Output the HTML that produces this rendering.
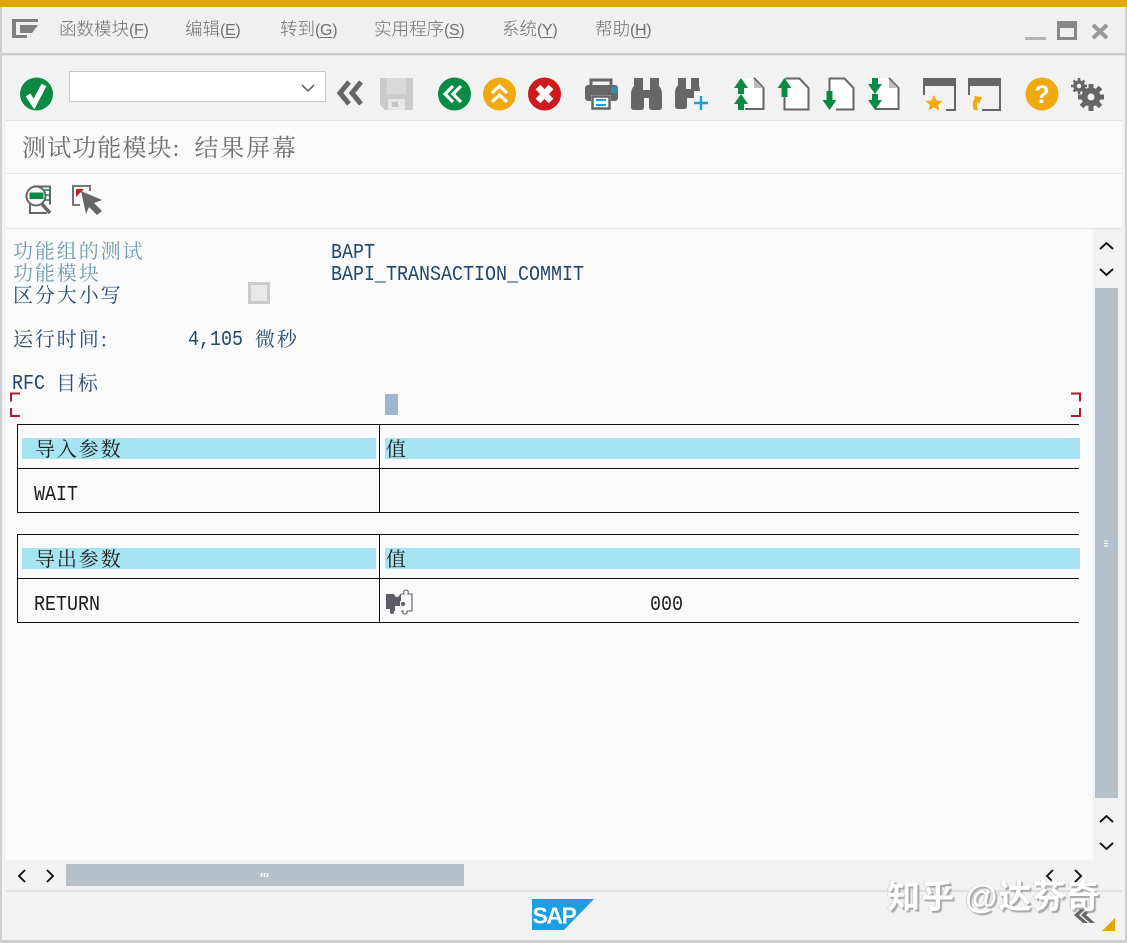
<!DOCTYPE html>
<html lang="zh">
<head>
<meta charset="utf-8">
<title>测试功能模块</title>
<style>
html,body{margin:0;padding:0;width:1127px;height:943px;overflow:hidden;background:#f2f2f2}
#p{position:relative;width:1127px;height:943px;overflow:hidden;background:#f2f2f2}
.b{position:absolute}
.t{position:absolute;white-space:pre;line-height:24px;height:24px}
.m{font-family:"Liberation Sans","Noto Sans CJK SC",sans-serif;font-weight:300;font-size:17.5px;color:#707070;top:17px}
.m span{font-size:16px;letter-spacing:-.3px}
.m u{text-underline-offset:2px}
.c{font-family:"Liberation Mono",monospace;font-size:21px;color:#23466e;transform:scaleX(.873);transform-origin:0 0}
.z{font-family:"Noto Serif CJK SC",serif;font-size:20px;letter-spacing:1.9px;transform:none;color:#2a4d75}
.k{color:#1c1c1c}
svg{position:absolute;left:0;top:0}
</style>
</head>
<body>
<div id="p">
<div class="b" style="left:0;top:0;width:1127px;height:7px;background:#dfa800"></div>
<div class="b" style="left:0;top:7px;width:1127px;height:46px;background:#f0f0f0"></div>
<div class="b" style="left:0;top:53px;width:1127px;height:2px;background:#c9c9c9"></div>
<div class="b" style="left:0;top:55px;width:1127px;height:1px;background:#e6e6e6"></div>
<div class="b" style="left:6px;top:120px;width:1116px;height:1px;background:#e3e3e3"></div>
<div class="b" style="left:6px;top:121px;width:1116px;height:52px;background:#fafafa"></div>
<div class="b" style="left:6px;top:173px;width:1116px;height:1px;background:#e6e6e6"></div>
<div class="b" style="left:6px;top:174px;width:1116px;height:54px;background:#fafafa"></div>
<div class="b" style="left:6px;top:228px;width:1116px;height:1px;background:#e3e3e3"></div>
<div class="b" style="left:6px;top:229px;width:1087px;height:631px;background:#fafafa"></div>
<div class="b" style="left:0;top:7px;width:2px;height:936px;background:#cfcfcf"></div>
<div class="b" style="right:0;top:7px;width:2px;height:936px;background:#cfcfcf"></div>
<div class="b" style="left:0;top:940px;width:1127px;height:3px;background:#cfcfcf"></div>
<div class="b" style="left:69px;top:71px;width:255px;height:29px;background:#fff;border:1px solid #c6c6c6"></div>
<div class="b" style="left:1095px;top:288px;width:23px;height:510px;background:#b5c0ca"></div>
<div class="b" style="left:66px;top:864px;width:398px;height:22px;background:#b5c0ca"></div>
<div class="b" style="left:6px;top:890px;width:1116px;height:2px;background:#dfdfdf"></div>
<div class="b" style="left:248px;top:282px;width:16px;height:16px;background:#e8e8e8;border:3px solid #cbcbcb"></div>
<div class="b" style="left:385px;top:394px;width:13px;height:21px;background:#9fb6d0"></div>

<div class="b" style="left:22px;top:438px;width:354px;height:21px;background:#a6e3f3"></div>
<div class="b" style="left:385px;top:438px;width:695px;height:21px;background:#a6e3f3"></div>
<div class="b" style="left:22px;top:548px;width:354px;height:21px;background:#a6e3f3"></div>
<div class="b" style="left:385px;top:548px;width:695px;height:21px;background:#a6e3f3"></div>

<div class="b" style="left:17px;top:424px;width:1062px;height:1px;background:#111"></div>
<div class="b" style="left:17px;top:468px;width:1062px;height:1px;background:#111"></div>
<div class="b" style="left:17px;top:512px;width:1062px;height:1px;background:#111"></div>
<div class="b" style="left:17px;top:424px;width:1px;height:89px;background:#111"></div>
<div class="b" style="left:379px;top:424px;width:1px;height:89px;background:#111"></div>
<div class="b" style="left:17px;top:534px;width:1062px;height:1px;background:#111"></div>
<div class="b" style="left:17px;top:578px;width:1062px;height:1px;background:#111"></div>
<div class="b" style="left:17px;top:622px;width:1062px;height:1px;background:#111"></div>
<div class="b" style="left:17px;top:534px;width:1px;height:89px;background:#111"></div>
<div class="b" style="left:379px;top:534px;width:1px;height:89px;background:#111"></div>

<div class="t m" style="left:59px">函数模块<span>(<u>F</u>)</span></div>
<div class="t m" style="left:185px">编辑<span>(<u>E</u>)</span></div>
<div class="t m" style="left:280px">转到<span>(<u>G</u>)</span></div>
<div class="t m" style="left:374px">实用程序<span>(<u>S</u>)</span></div>
<div class="t m" style="left:502px">系统<span>(<u>Y</u>)</span></div>
<div class="t m" style="left:595px">帮助<span>(<u>H</u>)</span></div>

<div class="t" style="left:22px;top:135px;line-height:28px;height:28px;font-family:'Liberation Serif','Noto Serif CJK SC',serif;font-size:24px;letter-spacing:1.100px;word-spacing:7px;color:#6f6f6f">测试功能模块: <span style="letter-spacing:1.800px">结果屏幕</span></div>

<div class="t z" style="left:13px;top:238px;color:#6f9eae">功能组的测试</div>
<div class="t z" style="left:13px;top:260px;color:#6f9eae">功能模块</div>
<div class="t z" style="left:13px;top:282px">区分大小写</div>
<div class="t c" style="left:331px;top:242px">BAPT</div>
<div class="t c" style="left:331px;top:264px">BAPI_TRANSACTION_COMMIT</div>
<div class="t z" style="left:13px;top:326px">运行时间:</div>
<div class="t c" style="left:188px;top:329px">4,105</div>
<div class="t z" style="left:255px;top:326px">微秒</div>
<div class="t c" style="left:12px;top:373px">RFC</div>
<div class="t z" style="left:56px;top:370px">目标</div>

<div class="t z k" style="left:35px;top:436px">导入参数</div>
<div class="t z k" style="left:386px;top:436px">值</div>
<div class="t c k" style="left:34px;top:484px">WAIT</div>
<div class="t z k" style="left:35px;top:546px">导出参数</div>
<div class="t z k" style="left:386px;top:546px">值</div>
<div class="t c k" style="left:34px;top:594px">RETURN</div>
<div class="t c k" style="left:650px;top:594px">000</div>

<svg width="1127" height="943" viewBox="0 0 1127 943">
  <!-- menu icon -->
  <path d="M12 19h26v3H16v13h11v3H12z" fill="#808080"/>
  <path d="M20 25h18l-6 8H20z" fill="#808080"/>
  <!-- window controls -->
  <rect x="1025" y="37" width="21" height="3" fill="#b4b4b4"/>
  <path fill-rule="evenodd" d="M1057 21h20v19h-20zM1060 28v9h14v-9z" fill="#888"/>
  <path d="M1093 25l14 13M1107 25l-14 13" stroke="#999" stroke-width="4" fill="none"/>
  <!-- ok -->
  <circle cx="36.500" cy="94" r="16.500" fill="#0a8a45"/>
  <path d="M28 95l6 9 10-19" stroke="#fff" stroke-width="5.500" fill="none"/>
  <!-- dropdown chevron -->
  <path d="M302 85l6 6 6-6" stroke="#666" stroke-width="1.600" fill="none"/>
  <!-- double chevron -->
  <path d="M349 82l-9 11 9 11M361 82l-9 11 9 11" stroke="#666" stroke-width="5" fill="none"/>
  <!-- save -->
  <path d="M380 78h33v32h-28l-5-5z" fill="#cbcbcb"/>
  <rect x="387" y="78" width="19" height="16" fill="#d9d9d9"/>
  <rect x="388" y="99" width="17" height="11" fill="#e6e6e6"/>
  <rect x="392" y="102" width="6" height="5" fill="#c4c4c4"/>
  <!-- nav circles -->
  <circle cx="454.500" cy="94" r="16.500" fill="#0a8a45"/>
  <path d="M453 86l-8 8 8 8M461 86l-8 8 8 8" stroke="#fff" stroke-width="3.200" fill="none"/>
  <circle cx="499.500" cy="94" r="16.500" fill="#f0a90f"/>
  <path d="M492 93l7.500-7 7.500 7M492 102l7.500-7 7.500 7" stroke="#fff" stroke-width="3.200" fill="none"/>
  <circle cx="544.500" cy="94" r="16.500" fill="#cf1a20"/>
  <path d="M538 87l13 14M551 87l-13 14" stroke="#fff" stroke-width="6.500" fill="none"/>
  <!-- printer -->
  <path d="M591 90v-10h20v10" stroke="#666" stroke-width="3" fill="none"/>
  <path d="M588 85h27a3 3 0 0 1 3 3v10a3 3 0 0 1-3 3h-4v-6h-20v6h-3a3.500 3.500 0 0 1-3-3V88a3 3 0 0 1 3-3z" fill="#666"/>
  <rect x="611" y="87" width="6" height="6" fill="#2f8fb5"/>
  <path d="M592.500 96.500h17v12h-17z" fill="#fff" stroke="#666" stroke-width="2.500"/>
  <path d="M596 100h10M596 105h10" stroke="#1aa0d8" stroke-width="2"/>
  <!-- binoculars -->
  <path d="M634 78h9v12h7V78h9v8q3 3 3 8v13q0 3-3 3h-7q-3 0-3-3v-9h-5v9q0 3-3 3h-7q-3 0-3-3V94q0-5 3-8z" fill="#666"/>
  <path d="M678 78h8v11h5V78h8v8q1 2 1 5h-6v7h-7v8q0 3-3 3h-6q-3 0-3-3V93q0-5 3-8z" fill="#666"/>
  <path d="M701 96v14M694 103h14" stroke="#1aa0d8" stroke-width="2.500"/>
  <!-- docs -->
  <path d="M745 78h9l10 10v22h-19z" fill="#fff"/>
  <path d="M754 78l9.500 10v21h-18.500" fill="none" stroke="#666" stroke-width="2"/>
  <path d="M754 79l9 9h-9z" fill="#bdbdbd"/>
  <path d="M741 78l-7 10h4v6h6v-6h4zM741 94l-7 10h4v6h6v-6h4z" fill="#0a8a45"/>
  <path d="M784.500 90v19.500h24V88l-9-9.500h-14" fill="#fff" stroke="#666" stroke-width="2"/>
  <path d="M784.500 78l-7 10h4v9h6v-9h4z" fill="#0a8a45"/>
  <path d="M829.500 99V78.500h15l9 9.500v21.500H836" fill="#fff" stroke="#666" stroke-width="2"/>
  <path d="M829.500 110l-7-10h4v-9h6v9h4z" fill="#0a8a45"/>
  <path d="M875 78h14l10 10v22h-24z" fill="#fff"/>
  <path d="M889 78l9.500 10v21h-23.500" fill="none" stroke="#666" stroke-width="2"/>
  <path d="M889 79l9 9h-9z" fill="#bdbdbd"/>
  <path d="M875 94l-7-10h4v-6h6v6h4zM875 110l-7-10h4v-6h6v6h4z" fill="#0a8a45"/>
  <!-- windows -->
  <path d="M923 78h33v8h-33z" fill="#666"/>
  <path d="M924 86v9M955 86v24h-9" stroke="#666" stroke-width="2" fill="none"/>
  <path d="M934 95l2.500 5.500 6 .5-4.500 4 1.500 5.500-5.500-3.200-5.500 3.200 1.500-5.500-4.500-4 6-.5z" fill="#f0a90f"/>
  <path d="M968 78h33v8h-33z" fill="#666"/>
  <path d="M969 86v9M1000 86v24h-18" stroke="#666" stroke-width="2" fill="none"/>
  <path d="M974 110q-3-7 1-12l-1-2 8 1-3 7-1-2q-2 3 0 8z" fill="#f0a90f"/>
  <!-- help -->
  <circle cx="1042" cy="94" r="16.500" fill="#f0a90f"/>
  <text x="1042" y="103" text-anchor="middle" font-family="Liberation Sans,sans-serif" font-weight="700" font-size="25" fill="#fff">?</text>
  <!-- gear -->
  <g fill="none" stroke="#666">
    <circle cx="1079" cy="86" r="4" stroke-width="3.500"/>
    <path d="M1079 78v3M1079 91v3M1071 86h3M1084 86h3M1073.500 80.500l2 2M1082.500 89.500l2 2M1084.500 80.500l-2 2M1075.500 89.500l-2 2" stroke-width="2.500"/>
    <circle cx="1091" cy="97" r="6.500" stroke-width="6"/>
    <path d="M1091 84v6M1091 104v7M1078 97h6M1098 97h6M1081.500 87.500l4 4M1096.500 102.500l4 4M1100.500 87.500l-4 4M1085.500 102.500l-4 4" stroke-width="5"/>
  </g>
  <!-- app toolbar: magnifier -->
  <path d="M33 186.500h17v18M30 201v12h17" stroke="#666" stroke-width="2" fill="none"/>
  <path d="M44 190h6M45 195h5M45 200h5" stroke="#0a8a45" stroke-width="1.500"/>
  <circle cx="36" cy="196" r="9.500" fill="#fafafa" stroke="#666" stroke-width="2"/>
  <rect x="29.500" y="192.500" width="14" height="6.500" fill="#0a8a45"/>
  <path d="M42 204l8 9" stroke="#666" stroke-width="3.500"/>
  <!-- cursor icon -->
  <path d="M80 205H73V186h17v5" stroke="#666" stroke-width="1.800" fill="none"/>
  <path d="M76 189h8l-8 8z" fill="#c21f2d"/>
  <path d="M81 191l21 9-8 3 8 8-5 4-8-8-3 7z" fill="#666"/>
  <!-- red brackets -->
  <path d="M20 393.500H11v8M11 408v8h9M1071 393.500h9v8M1080 408v8h-9" stroke="#b01c2e" stroke-width="2" fill="none"/>
  <!-- puzzle icon -->
  <path d="M386 594h8q1 3 3 3t3-3h1v7h-1v5h-5v3h-9z" fill="#5d5d68"/>
  <path d="M401 594h3q-1-4 2-4t2 4h4v17h-5q1 3-2 3t-2-3h-2" fill="#f8f8f8" stroke="#5d5d68" stroke-width="1.100"/>
  <circle cx="403" cy="604" r="2" fill="#5d5d68"/>
  <circle cx="392" cy="612" r="2" fill="#5d5d68"/>
  <path d="M390 609h5v2h-5z" fill="#5d5d68"/>
  <!-- scrollbar grip -->
  <path d="M1104 541h4M1104 543.500h4M1104 546h4" stroke="#fff" stroke-width="1"/>
  <path d="M261.500 873v4M264.500 873v4M267.500 873v4" stroke="#fff" stroke-width="1.500"/>
  <!-- scroll arrows -->
  <g fill="none" stroke="#111" stroke-width="1.900">
    <path d="M1100 249l6.500-6 6.500 6M1100 269l6.500 6 6.500-6"/>
    <path d="M1100 822l6.500-6 6.500 6M1100 843l6.500 6 6.500-6"/>
    <path d="M25 870l-6 6 6 6M47 870l6 6-6 6"/>
    <path d="M1053 870l-6 6 6 6M1075 870l6 6-6 6"/>
  </g>
  <!-- SAP logo -->
  <path d="M532 899h62l-30 31h-32z" fill="#1a9fe0"/>
  <text x="532.500" y="923.500" font-family="Liberation Sans,sans-serif" font-weight="700" font-size="23" letter-spacing="-1.500" fill="#fff">SAP</text>
  <!-- status bar chevrons + corner -->
  <path d="M1083 907l-9 8 9 8h5l-9-8 9-8zM1090 907l-9 8 9 8h5l-9-8 9-8z" fill="#666"/>
  <path d="M1115 918v13h-13z" fill="#dfa800"/>
</svg>

<div class="t" style="left:887px;top:879px;height:36px;line-height:36px;font-family:'Liberation Sans','Noto Sans CJK SC',sans-serif;font-weight:700;font-size:33px;letter-spacing:1px;color:#fff;text-shadow:2px 2px 1px #a8a8a8,-1px 0 0 #d0d0d0">知乎 @达芬奇</div>
</div>
</body>
</html>
